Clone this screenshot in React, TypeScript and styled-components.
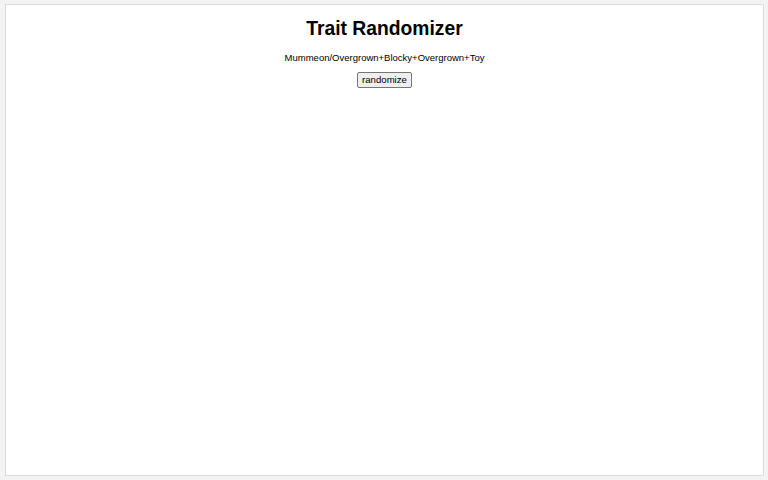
import styled, { createGlobalStyle } from 'styled-components';

const Global = createGlobalStyle`
  html, body {
    margin: 0;
    padding: 0;
    background: #f3f3f3;
    font-family: 'Liberation Sans', Arial, sans-serif;
  }
`;

const Page = styled.div`
  box-sizing: border-box;
  height: 480px;
  padding: 4px 4px 4px 4px;
`;

const Panel = styled.div`
  box-sizing: border-box;
  height: 472px;
  margin-left: 1px;
  background: #fff;
  border: 1px solid #dcdcdc;
  display: flex;
  flex-direction: column;
  align-items: center;
  padding-top: 14px;
`;

const Title = styled.h1`
  margin: 0;
  font-size: 19.3px;
  font-weight: bold;
  line-height: 20px;
  color: #000;
`;

const Result = styled.p`
  margin: 13px 0 0;
  font-size: 9.5px;
  line-height: 12px;
  color: #000;
`;

const Button = styled.button`
  margin-top: 8px;
  font-family: 'Liberation Sans', Arial, sans-serif;
  font-size: 9.6px;
  line-height: 12px;
  padding: 1px 4px;
  color: #000;
  background: #efefef;
  border: 1px solid #767676;
  border-radius: 2px;
`;

export default function App() {
  return (
    <>
      <Global />
      <Page>
        <Panel>
          <Title>Trait Randomizer</Title>
          <Result>Mummeon/Overgrown+Blocky+Overgrown+Toy</Result>
          <Button>randomize</Button>
        </Panel>
      </Page>
    </>
  );
}
